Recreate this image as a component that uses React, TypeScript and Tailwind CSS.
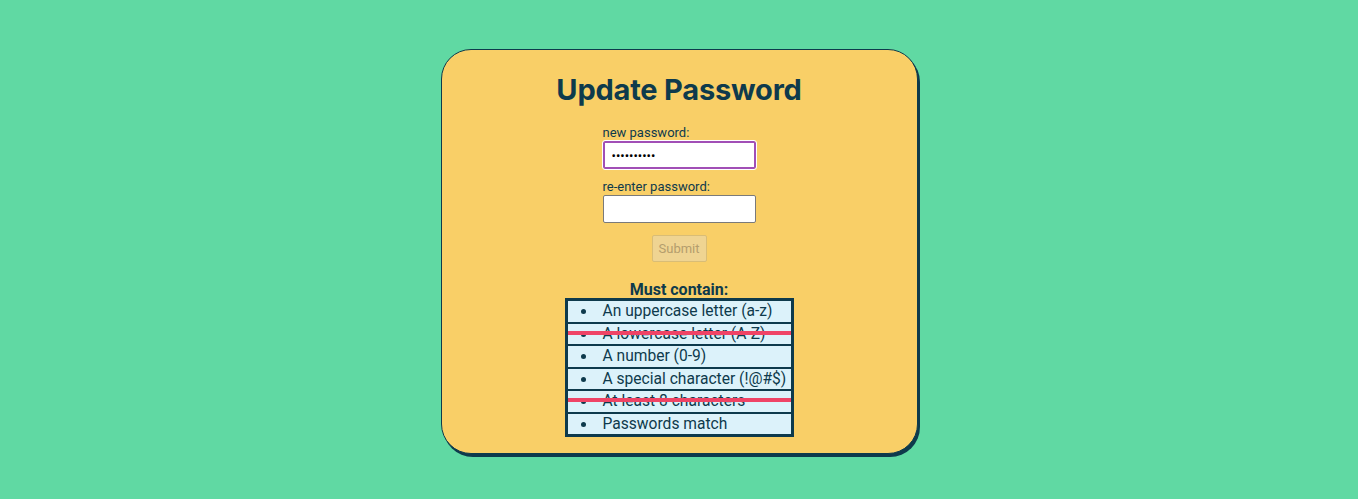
import React from "react";

const items = [
  { text: "An uppercase letter (a-z)", done: false },
  { text: "A lowercase letter (A-Z)", done: true },
  { text: "A number (0-9)", done: false },
  { text: "A special character (!@#$)", done: false },
  { text: "At least 8 characters", done: true },
  { text: "Passwords match", done: false },
];

export default function App() {
  return (
    <div
      className="min-h-[499px] bg-[#60d9a3] flex justify-center pt-[49px]"
      style={{ fontFamily: "Roboto, 'Liberation Sans', sans-serif" }}
    >
      <div className="w-[477px] h-[405px] rounded-[30px] border border-[#0e3a4c] shadow-[2px_3px_0_#0e3a4c] bg-[#f9cf67] flex flex-col items-center pt-[22px] text-[#0e3a4c]">
        <h1
          className="text-[29px] leading-[36px] font-bold tracking-[-0.2px]"
          style={{ fontFamily: "Inter, sans-serif" }}
        >
          Update Password
        </h1>
        <div className="flex flex-col w-[153px] mt-[17px]">
          <label className="text-[13px] leading-[15px] h-[15px]">new password:</label>
          <input
            type="password"
            defaultValue="aaaaaaaaaa"
            className="h-[28px] w-[153px] mt-[1px] bg-white border-2 border-[#a14fb6] rounded-[2px] outline outline-1 outline-white px-[7px] text-[13px] text-black"
          />
          <label className="text-[13px] leading-[15px] h-[15px] mt-[10px]">re-enter password:</label>
          <input
            type="password"
            className="h-[28px] w-[153px] mt-[1px] bg-white border border-[#7a7a7a] rounded-[2px] px-[7px] text-[13px]"
          />
        </div>
        <button
          disabled
          className="mt-[12px] h-[27px] w-[55px] bg-[#efd492] border border-[#d9bd76] rounded-[2px] text-[13px] text-[#b49d6d]"
        >
          Submit
        </button>
        <div className="mt-[18px] text-[16px] leading-[19px] font-bold">Must contain:</div>
        <ul className="w-[229px] border-2 border-[#0e3a4c] list-none pl-0 -mt-[1px]">
          {items.map((it) => (
            <li
              key={it.text}
              className="relative h-[22.5px] border border-[#0e3a4c] bg-[#dcf2fa] text-[15.6px] leading-[20px] pl-[35px] whitespace-nowrap"
            >
              <span className="absolute left-[13px] top-[8px] w-[5px] h-[5px] rounded-full bg-[#0e3a4c]" />
              <span>{it.text}</span>
              {it.done && (
                <div className="absolute left-0 right-0 top-[7px] h-[4px] bg-[#ef4466]" />
              )}
            </li>
          ))}
        </ul>
      </div>
    </div>
  );
}
